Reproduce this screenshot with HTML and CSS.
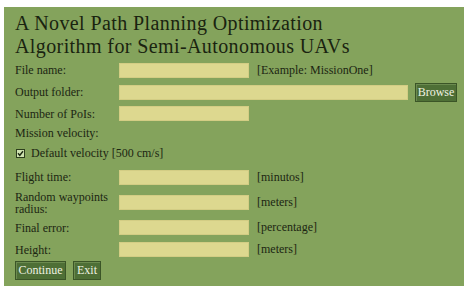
FILE: index.html
```html
<!DOCTYPE html>
<html lang="en">
<head>
    <meta charset="UTF-8">
    <title>Path Planning Optimization</title>
    <link rel="stylesheet" href="styles.css">
</head>
<body>

    <div class="panel">

        <h1>A Novel Path Planning Optimization<br>Algorithm for Semi-Autonomous UAVs</h1>

        <!-- Mission fields -->

        <div class="row">
            <label class="label">File name:</label>
            <input class="field" type="text">
            <span class="unit">[Example: MissionOne]</span>
        </div>

        <div class="row">
            <label class="label">Output folder:</label>
            <input class="field field-wide" type="text">
            <button class="btn btn-browse">Browse</button>
        </div>

        <div class="row row-pois">
            <label class="label">Number of PoIs:</label>
            <input class="field" type="text">
        </div>

        <div class="row row-short">
            <label class="label">Mission velocity:</label>
        </div>

        <div class="row row-check">
            <span class="check">
                <svg width="9" height="9" viewBox="0 0 9 9">
                    <rect x="0.5" y="0.5" width="8" height="8" fill="#cfe3b1" stroke="#2c3d1c"/>
                    <path d="M2 4.3 L3.8 6.3 L7 2.3" fill="none" stroke="#1d2a12" stroke-width="1.4"/>
                </svg>
            </span>
            <span class="check-text">Default velocity [500 cm/s]</span>
        </div>

        <div class="row row-flight">
            <label class="label">Flight time:</label>
            <input class="field" type="text">
            <span class="unit">[minutos]</span>
        </div>

        <div class="row row-tall">
            <label class="label">Random waypoints radius:</label>
            <input class="field" type="text">
            <span class="unit">[meters]</span>
        </div>

        <div class="row row-error">
            <label class="label">Final error:</label>
            <input class="field" type="text">
            <span class="unit">[percentage]</span>
        </div>

        <div class="row row-height">
            <label class="label">Height:</label>
            <input class="field" type="text">
            <span class="unit">[meters]</span>
        </div>

        <!-- Actions -->

        <div class="actions">
            <button class="btn btn-continue">Continue</button>
            <button class="btn btn-exit">Exit</button>
        </div>

    </div>

</body>
</html>
```

FILE: styles.css
```css
*{
    margin: 0;
    padding: 0;
    box-sizing: border-box;
}

body{
    background-color: #fff;
    font-family: "Liberation Serif", "Times New Roman", serif;
    color: #1c2612;
}

.panel{
    width: 460px;
    height: 279px;
    margin: 7px 0 0 4px;
    padding: 5px 0 0 11px;
    background-color: #84a35c;
}

h1{
    font-weight: normal;
    font-size: 20px;
    line-height: 23px;
    letter-spacing: 0.4px;
    color: #1a2310;
    margin-bottom: 1px;
}

.row{
    display: flex;
    align-items: center;
    height: 22px;
    font-size: 12px;
}

.row-pois{ height: 21px; }
.row-short{ height: 18px; }
.row-check{ height: 23px; }
.row-flight{ height: 24px; }
.row-tall{ height: 27px; }
.row-error{ height: 23px; }
.row-height{ height: 21px; }

.label{
    width: 104px;
    flex-shrink: 0;
    line-height: 12px;
}

.field{
    width: 130px;
    height: 15px;
    border: none;
    background-color: #ddd88f;
    box-shadow: inset 0 0 0 1px #d3cd84;
}

.field-wide{
    width: 289px;
}

.unit{
    margin-left: 8px;
}

.check{
    display: flex;
    margin: 0 6px 0 1px;
}

.btn{
    font-family: "Liberation Serif", "Times New Roman", serif;
    font-size: 12px;
    color: #eef2e2;
    background-color: #4e6f36;
    border: 1px solid #3b5527;
    box-shadow: inset 1px 1px 0 #6b8a4f;
    height: 19px;
    cursor: pointer;
}

.btn-browse{
    width: 42px;
    margin-left: 7px;
}

.actions{
    display: flex;
    gap: 7px;
    margin-top: 1px;
}

.btn-continue{
    width: 51px;
}

.btn-exit{
    width: 28px;
}
```
